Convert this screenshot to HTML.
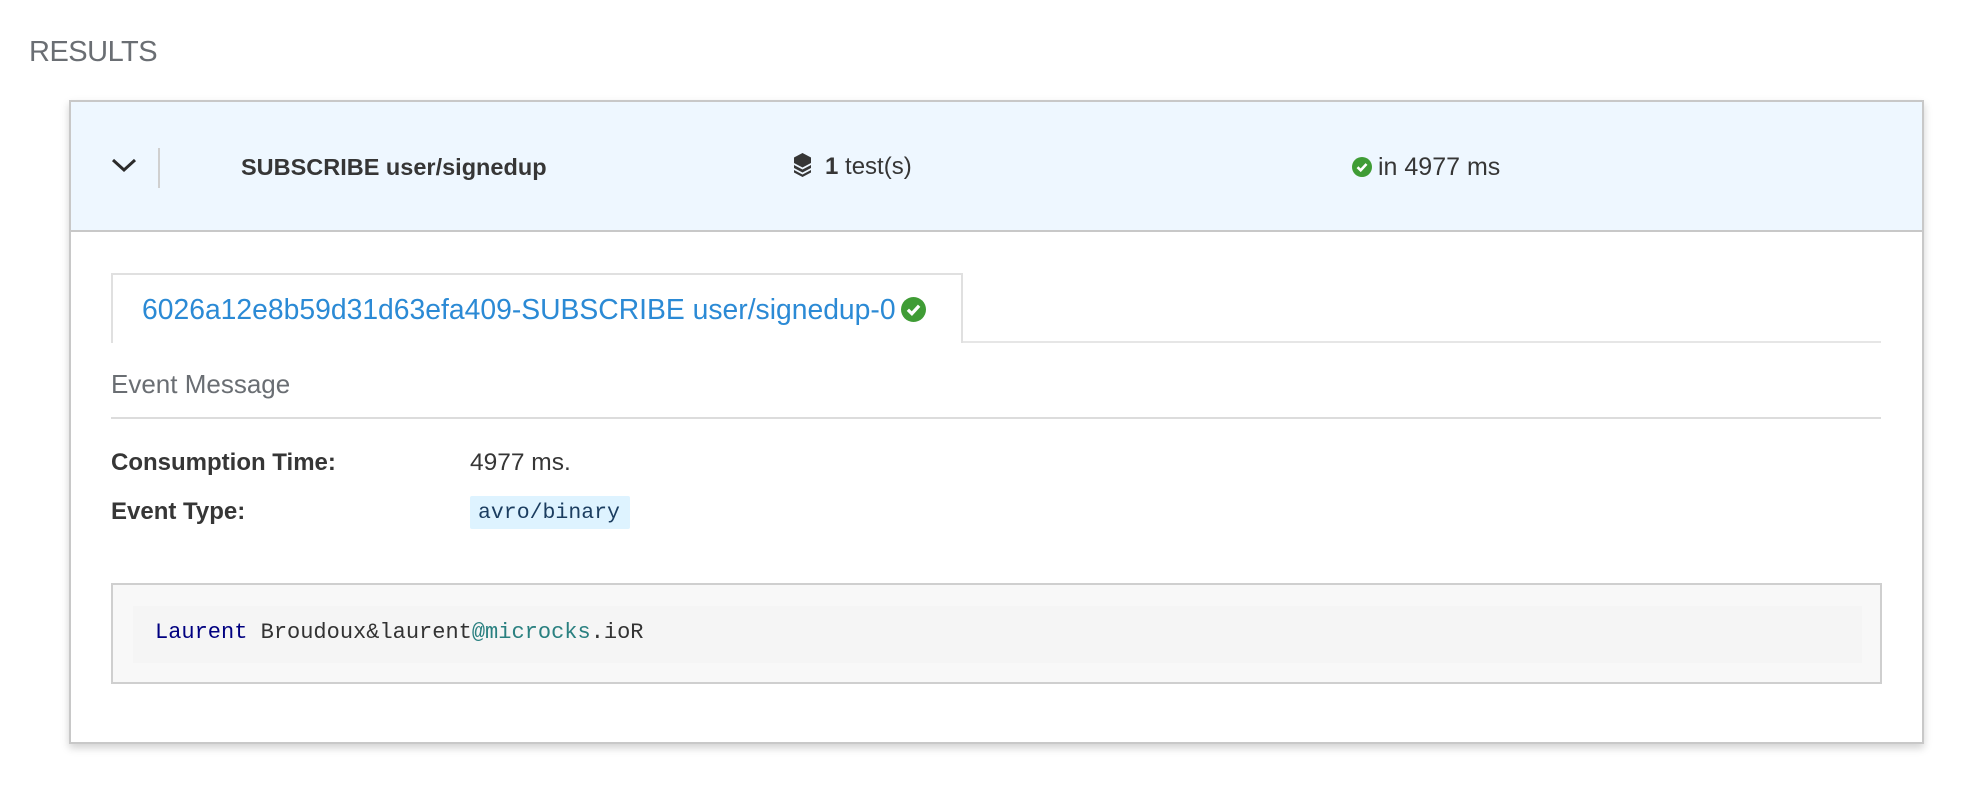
<!DOCTYPE html>
<html><head><meta charset="utf-8"><style>
*{margin:0;padding:0;box-sizing:border-box}
body{width:1976px;height:812px;background:#fff;font-family:"Liberation Sans",sans-serif;color:#363636;position:relative;overflow:hidden}
.abs{position:absolute;white-space:nowrap}
</style></head><body>
<div class="abs" style="left:29px;top:34px;font-size:29px;color:#6a6e73;letter-spacing:-0.5px;line-height:36px">RESULTS</div>

<div class="abs" style="left:69px;top:100px;width:1855px;height:644px;border:2px solid #c8c8c8;background:#fff;box-shadow:0 4px 8px rgba(0,0,0,0.18)"></div>
<div class="abs" style="left:71px;top:102px;width:1851px;height:130px;background:#eef7ff;border-bottom:2px solid #c8c8c8"></div>

<svg class="abs" style="left:110px;top:156px" width="28" height="20" viewBox="0 0 28 20"><path d="M3 4 L14 14 L25 4" fill="none" stroke="#2b2b2b" stroke-width="3"/></svg>
<div class="abs" style="left:158px;top:148px;width:2px;height:40px;background:#d0d0d0"></div>

<div class="abs" style="left:241px;top:152px;font-size:23.5px;font-weight:bold;line-height:30px;color:#363636">SUBSCRIBE user/signedup</div>

<svg class="abs" style="left:793px;top:152px" width="19" height="26" viewBox="0 0 19 26"><path d="M9.5 1 L18 5.5 L18 11 L9.5 15.5 L1 11 L1 5.5 Z" fill="#363636"/><path d="M1 13 L9.5 17.5 L18 13 L18 16 L9.5 20.5 L1 16 Z" fill="#363636"/><path d="M1 18 L9.5 22.5 L18 18 L18 20.5 L9.5 25 L1 20.5 Z" fill="#363636"/></svg>
<div class="abs" style="left:825px;top:152px;font-size:24px;line-height:30px;color:#363636"><b>1</b> test(s)</div>

<svg class="abs" style="left:1352px;top:157px" width="20" height="20" viewBox="0 0 20 20"><circle cx="10" cy="10" r="10" fill="#3f9c35"/><path d="M5.5 10.2 L8.7 13.3 L14.5 7" fill="none" stroke="#fff" stroke-width="2.6"/></svg>
<div class="abs" style="left:1378px;top:152px;font-size:25px;line-height:30px;color:#363636">in 4977 ms</div>

<div class="abs" style="left:111px;top:341px;width:1770px;height:2px;background:#e6e6e6"></div>
<div class="abs" style="left:111px;top:273px;width:852px;height:70px;border:2px solid #e0e0e0;border-bottom:none;background:#fff"></div>
<div class="abs" style="left:142px;top:292px;font-size:28.3px;line-height:34px;color:#2b8ad5">6026a12e8b59d31d63efa409-SUBSCRIBE user/signedup-0<svg style="vertical-align:-3px;margin-left:5px" width="25" height="25" viewBox="0 0 20 20"><circle cx="10" cy="10" r="10" fill="#3f9c35"/><path d="M5.5 10.2 L8.7 13.3 L14.5 7" fill="none" stroke="#fff" stroke-width="2.6"/></svg></div>

<div class="abs" style="left:111px;top:368px;font-size:26px;line-height:32px;color:#6a6e73">Event Message</div>
<div class="abs" style="left:111px;top:417px;width:1770px;height:2px;background:#dcdcdc"></div>

<div class="abs" style="left:111px;top:448px;font-size:24px;font-weight:bold;line-height:30px">Consumption Time:</div>
<div class="abs" style="left:470px;top:448px;font-size:24.5px;line-height:30px">4977 ms.</div>
<div class="abs" style="left:111px;top:497px;font-size:24px;font-weight:bold;line-height:30px">Event Type:</div>
<div class="abs" style="left:470px;top:496px;width:160px;height:33px;background:#def3ff;border-radius:2px"></div>
<div class="abs" style="left:478px;top:499px;font-family:'Liberation Mono',monospace;font-size:21.5px;line-height:28px;color:#1b3d60">avro/binary</div>

<div class="abs" style="left:111px;top:583px;width:1771px;height:101px;border:2px solid #cfcfcf;background:#f8f8f8"></div>
<div class="abs" style="left:133px;top:606px;width:1729px;height:57px;background:#f5f5f5"></div>
<div class="abs" style="left:155px;top:619px;font-family:'Liberation Mono',monospace;font-size:22px;line-height:28px;color:#333"><span style="color:#000080">Laurent</span> Broudoux&amp;laurent<span style="color:#2a8080">@microcks</span>.ioR</div>
</body></html>
